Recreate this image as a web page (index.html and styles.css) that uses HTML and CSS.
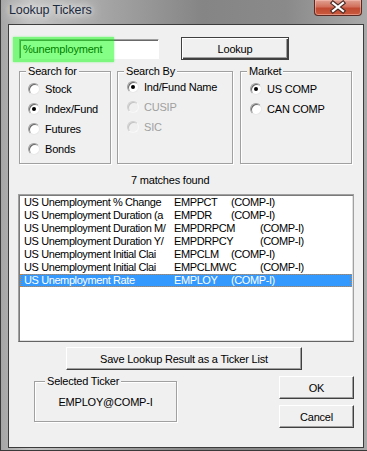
FILE: index.html
```html
<!DOCTYPE html>
<html lang="en">
<head>
    <meta charset="UTF-8">
    <title>Lookup Tickers</title>
    <link rel="stylesheet" href="styles.css">
</head>
<body>
  <div class="window">
    <div class="titlebar">
      <span class="title">Lookup Tickers</span>
      <div class="close">
        <svg width="48" height="16" viewBox="0 0 48 16">
          <path d="M19 4 L29 12 M29 4 L19 12" stroke="#4a2a25" stroke-width="4.4" stroke-linecap="square"/>
          <path d="M19 4 L29 12 M29 4 L19 12" stroke="#ffffff" stroke-width="2.2" stroke-linecap="square"/>
        </svg>
      </div>
    </div>

    <div class="client">
      <div class="search-row">
        <div class="edit">%unemployment</div>
        <div class="btn default lookup">Lookup</div>
      </div>

      <div class="groups">
        <div class="group search-for">
          <span class="legend">Search for</span>
          <div class="opt"><span class="radio"></span>Stock</div>
          <div class="opt"><span class="radio on"></span>Index/Fund</div>
          <div class="opt"><span class="radio"></span>Futures</div>
          <div class="opt"><span class="radio"></span>Bonds</div>
        </div>
        <div class="group search-by">
          <span class="legend">Search By</span>
          <div class="opt"><span class="radio on"></span>Ind/Fund Name</div>
          <div class="opt off"><span class="radio"></span>CUSIP</div>
          <div class="opt off"><span class="radio"></span>SIC</div>
        </div>
        <div class="group market">
          <span class="legend">Market</span>
          <div class="opt"><span class="radio on"></span>US COMP</div>
          <div class="opt"><span class="radio"></span>CAN COMP</div>
        </div>
      </div>

      <div class="matches">7 matches found</div>

      <div class="listbox">
        <div class="row"><span class="name">US Unemployment % Change</span><span class="sym">EMPPCT</span><span>(COMP-I)</span></div>
        <div class="row"><span class="name">US Unemployment Duration (a</span><span class="sym">EMPDR</span><span>(COMP-I)</span></div>
        <div class="row"><span class="name">US Unemployment Duration M/</span><span class="sym wide">EMPDRPCM</span><span>(COMP-I)</span></div>
        <div class="row"><span class="name">US Unemployment Duration Y/</span><span class="sym wide">EMPDRPCY</span><span>(COMP-I)</span></div>
        <div class="row"><span class="name">US Unemployment Initial Clai</span><span class="sym">EMPCLM</span><span>(COMP-I)</span></div>
        <div class="row"><span class="name">US Unemployment Initial Clai</span><span class="sym wide">EMPCLMWC</span><span>(COMP-I)</span></div>
        <div class="row selected"><span class="name">US Unemployment Rate</span><span class="sym">EMPLOY</span><span>(COMP-I)</span></div>
      </div>

      <div class="btn save">Save Lookup Result as a Ticker List</div>

      <div class="bottom-row">
        <div class="group ticker">
          <span class="legend">Selected Ticker</span>
          <div class="ticker-value">EMPLOY@COMP-I</div>
        </div>
        <div class="actions">
          <div class="btn">OK</div>
          <div class="btn">Cancel</div>
        </div>
      </div>
    </div>

    <div class="highlight"></div>
  </div>
</body>
</html>
```

FILE: styles.css
```css
body {
  margin: 0;
  background: #8c8c8c;
}

.window {
  position: relative;
  width: 367px;
  height: 451px;
  box-sizing: border-box;
  padding: 0 4px 3px 7px;
  background: linear-gradient(to right, #a6a6a6 0%, #c2c2c2 8%, #a3a3a3 30%, #858585 55%, #8a8a8a 78%, #a9a9a9 100%);
  border-left: 1px solid #3a3a3a;
  border-bottom: 1px solid #3a3a3a;
  font-family: "Liberation Sans", Arial, sans-serif;
  font-size: 11px;
  letter-spacing: -0.2px;
  color: #000;
}

.titlebar {
  height: 24px;
  display: flex;
  align-items: flex-start;
  justify-content: space-between;
}

.title {
  margin: 3px 0 0 1px;
  font-size: 12.5px;
  line-height: 15px;
  letter-spacing: -0.1px;
  color: #1c2a3e;
  text-shadow: 0 0 6px #f2f2f2, 0 0 10px #e6e6e6, 0 0 14px #dcdcdc;
}

.close {
  width: 48px;
  height: 16px;
  margin-right: 1px;
  box-sizing: border-box;
  border: 1px solid #5a2a22;
  border-top: none;
  border-radius: 0 0 4px 4px;
  background: linear-gradient(#e0a193 0%, #d2705c 45%, #c04a32 55%, #c95a3c 100%);
  box-shadow: inset 0 0 0 1px rgba(255, 200, 190, 0.5);
}

.close svg {
  display: block;
  margin: -1px 0 0 -1px;
}

.client {
  width: 356px;
  height: 424px;
  box-sizing: border-box;
  border: 1px solid #3c3c3c;
  background: #f0f0f0;
}

/* top row */
.search-row {
  display: flex;
  align-items: flex-start;
  padding-top: 12px;
}

.edit {
  width: 140px;
  height: 20px;
  box-sizing: border-box;
  margin: 2px 0 0 10px;
  padding: 2px 0 0 3px;
  background: #fff;
  border: 1px solid;
  border-color: #a0a0a0 #fff #fff #a0a0a0;
  box-shadow: inset 1px 1px 0 #696969;
  line-height: 14px;
}

.btn {
  height: 23px;
  box-sizing: border-box;
  display: flex;
  align-items: center;
  justify-content: center;
  background: #f0f0f0;
  border: 1px solid;
  border-color: #fff #404040 #404040 #fff;
  box-shadow: inset -1px -1px 0 #a0a0a0;
}

.btn.default {
  border-color: #404040;
  box-shadow: inset 1px 1px 0 #fff, inset -1px -1px 0 #404040, inset -2px -2px 0 #a0a0a0;
}

.lookup {
  width: 108px;
  margin-left: 22px;
}

/* option groups */
.groups {
  display: flex;
  margin: 11px 0 0 10px;
}

.group {
  position: relative;
  height: 93px;
  box-sizing: border-box;
  border: 1px solid #a0a0a0;
  box-shadow: inset 1px 1px 0 #fff, 1px 1px 0 #fff;
}

.legend {
  position: absolute;
  top: -7px;
  left: 6px;
  padding: 0 2px;
  line-height: 13px;
  background: #f0f0f0;
}

.search-for {
  width: 92px;
  padding: 7px 0 0 8px;
}

.search-by {
  width: 116px;
  margin-left: 6px;
  padding: 5px 0 0 9px;
}

.market {
  width: 112px;
  margin-left: 7px;
  padding: 7px 0 0 9px;
}

.opt {
  height: 20px;
  display: flex;
  align-items: center;
  gap: 5px;
}

.opt.off {
  color: #a0a0a0;
}

.radio {
  width: 12px;
  height: 12px;
  box-sizing: border-box;
  border-radius: 50%;
  border: 1px solid;
  border-color: #a0a0a0 #e8e8e8 #e8e8e8 #a0a0a0;
  background: #fff;
  box-shadow: inset 1px 1px 0 #696969;
  display: flex;
  align-items: center;
  justify-content: center;
}

.radio.on::after {
  content: "";
  width: 4px;
  height: 4px;
  border-radius: 50%;
  background: #000;
}

.off .radio {
  background: #f0f0f0;
  box-shadow: inset 1px 1px 0 #c4c4c4;
  border-color: #d0d0d0 #f8f8f8 #f8f8f8 #d0d0d0;
}

.matches {
  margin: 10px 0 0 122px;
  line-height: 13px;
}

/* list */
.listbox {
  width: 336px;
  height: 148px;
  box-sizing: border-box;
  margin: 7px 0 0 9px;
  background: #fff;
  border: 1px solid #a0a0a0;
  border-bottom-color: #646464;
  box-shadow: inset 1px 1px 0 #7a7a7a, inset -1px -1px 0 #e0e0e0;
  padding: 1px;
}

.row {
  height: 13px;
  line-height: 13px;
  display: flex;
  padding-left: 4px;
  white-space: nowrap;
  letter-spacing: -0.4px;
}

.row .name {
  width: 150px;
  overflow: hidden;
  flex: none;
}

.row .sym {
  width: 57px;
  flex: none;
}

.row .sym.wide {
  width: 86px;
}

.row.selected {
  background: #3399ff;
  color: #fff;
  outline: 1px dotted #d9822b;
  outline-offset: -1px;
}

.save {
  width: 236px;
  margin: 5px 0 0 57px;
}

/* bottom */
.bottom-row {
  display: flex;
  align-items: flex-start;
  margin-top: 6px;
}

.ticker {
  width: 143px;
  height: 41px;
  margin: 5px 0 0 25px;
  display: flex;
  align-items: center;
  justify-content: center;
}

.ticker .legend {
  left: 10px;
}

.ticker-value {
  margin-top: 1px;
}

.actions {
  display: flex;
  flex-direction: column;
  gap: 6px;
  margin-left: 102px;
}

.actions .btn {
  width: 75px;
}

.highlight {
  position: absolute;
  left: 12px;
  top: 37px;
  width: 101px;
  height: 25px;
  background: rgba(0, 255, 0, 0.48);
  box-shadow: 0 0 2px rgba(0, 255, 0, 0.4);
}
```
